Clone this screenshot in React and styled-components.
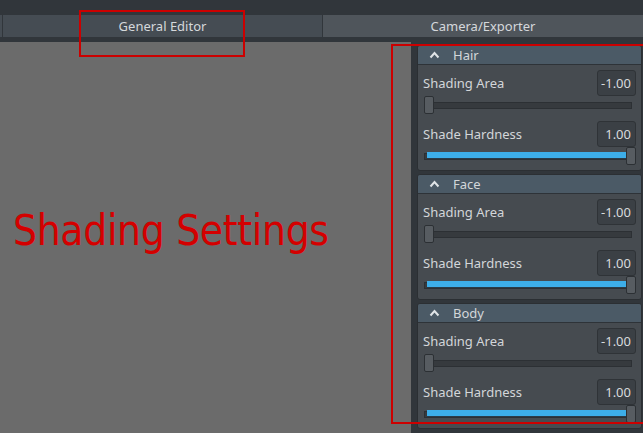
import styled, { createGlobalStyle } from 'styled-components';

const GlobalStyle = createGlobalStyle`
  html, body {
    margin: 0;
    padding: 0;
    background: #6b6b6b;
    overflow: hidden;
  }
`;

const Screen = styled.div`
  position: relative;
  width: 643px;
  height: 433px;
  display: flex;
  flex-direction: column;
  font-family: 'Noto Sans', 'DejaVu Sans', sans-serif;
  color: #d3d6d9;
  overflow: hidden;
`;

const TabBar = styled.div`
  height: 42px;
  box-sizing: border-box;
  padding-top: 15px;
  background: #31363b;
  display: flex;
  align-items: flex-start;
  gap: 1px;
`;

const Tab = styled.div`
  height: 22px;
  width: ${(p) => (p.$w ? `${p.$w}px` : 'auto')};
  flex: ${(p) => (p.$w ? 'none' : '1')};
  background: ${(p) => (p.$active ? '#454c53' : '#4f555b')};
  display: flex;
  align-items: center;
  justify-content: center;
  font-size: 13px;
  color: #d5d8db;
`;

const Main = styled.div`
  flex: 1;
  display: flex;
  min-height: 0;
`;

const Canvas = styled.div`
  flex: 1;
  background: #6b6b6b;
  padding: 168px 0 0 13px;
`;

const Caption = styled.div`
  font-family: 'DejaVu Sans Condensed', 'DejaVu Sans', sans-serif;
  font-size: 42px;
  letter-spacing: -0.3px;
  color: #d40000;
  line-height: 1;
`;

const Sidebar = styled.div`
  width: 232px;
  background: #31363b;
  box-sizing: border-box;
  padding: 3px 1px 0 6px;
  display: flex;
  flex-direction: column;
  gap: 3px;
`;

const Section = styled.div`
  height: 126px;
  flex: none;
  box-sizing: border-box;
  border: 1px solid #2b2f33;
  border-radius: 3px;
  background: #464b50;
  overflow: hidden;
`;

const Header = styled.div`
  height: 19px;
  box-sizing: border-box;
  background: #4b5a66;
  border-bottom: 1px solid #2e3338;
  display: flex;
  align-items: center;
  padding-left: 11px;
  gap: 13px;
  font-size: 13px;
  color: #d3d7da;
`;

const Body = styled.div`
  padding: 5px 5px 0 5px;
  display: flex;
  flex-direction: column;
`;

const Row = styled.div`
  display: flex;
  align-items: center;
  justify-content: space-between;
  height: 26px;
  margin-top: ${(p) => p.$gap || 0}px;
  font-size: 13px;
`;

const ValueBox = styled.div`
  width: 39px;
  height: 26px;
  box-sizing: border-box;
  border: 1px solid #2f3337;
  border-radius: 3px;
  background: #3b4045;
  display: flex;
  align-items: center;
  justify-content: flex-end;
  padding-right: 4px;
  font-size: 13px;
  color: #d8dbde;
`;

const SliderWrap = styled.div`
  position: relative;
  height: 18px;
  margin: 0 0 0 1px;
  width: 212px;
`;

const Track = styled.div`
  position: absolute;
  left: 0;
  right: 4px;
  top: 6px;
  height: 7px;
  box-sizing: border-box;
  background: #363a3e;
  border: 1px solid #2c3034;
`;

const Fill = styled.div`
  position: absolute;
  left: 3px;
  top: 5px;
  height: 6px;
  background: #3daee9;
  border-bottom: 1px solid #2a3b48;
`;

const Handle = styled.div`
  position: absolute;
  top: 0;
  width: 10px;
  height: 18px;
  box-sizing: border-box;
  background: #575c61;
  border: 1px solid #2c3034;
  border-radius: 2px;
`;

const Annotation = styled.div`
  position: absolute;
  border: 2px solid #cc0000;
  pointer-events: none;
`;

function Chevron() {
  return (
    <svg width="11" height="8" viewBox="0 0 11 8">
      <path d="M1.5 6.5 L5.5 2 L9.5 6.5" fill="none" stroke="#dfe3e6" strokeWidth="2" />
    </svg>
  );
}

function Slider({ value }) {
  const full = value >= 1;
  return (
    <SliderWrap>
      <Track />
      {full && <Fill style={{ width: 199 }} />}
      <Handle style={{ left: full ? 202 : 0 }} />
    </SliderWrap>
  );
}

function ShadingSection({ title }) {
  return (
    <Section>
      <Header>
        <Chevron />
        <span>{title}</span>
      </Header>
      <Body>
        <Row>
          <span>Shading Area</span>
          <ValueBox>-1.00</ValueBox>
        </Row>
        <Slider value={0} />
        <Row $gap={7}>
          <span>Shade Hardness</span>
          <ValueBox>1.00</ValueBox>
        </Row>
        <Slider value={1} />
      </Body>
    </Section>
  );
}

export default function App() {
  return (
    <>
      <GlobalStyle />
      <Screen>
        <TabBar>
          <Tab $w={2} $active />
          <Tab $w={319} $active>
            General Editor
          </Tab>
          <Tab>Camera/Exporter</Tab>
        </TabBar>
        <Main>
          <Canvas>
            <Caption>Shading Settings</Caption>
          </Canvas>
          <Sidebar>
            <ShadingSection title="Hair" />
            <ShadingSection title="Face" />
            <ShadingSection title="Body" />
          </Sidebar>
        </Main>
        <Annotation style={{ left: 79, top: 10, width: 162, height: 43 }} />
        <Annotation style={{ left: 391, top: 44, width: 254, height: 376 }} />
      </Screen>
    </>
  );
}
